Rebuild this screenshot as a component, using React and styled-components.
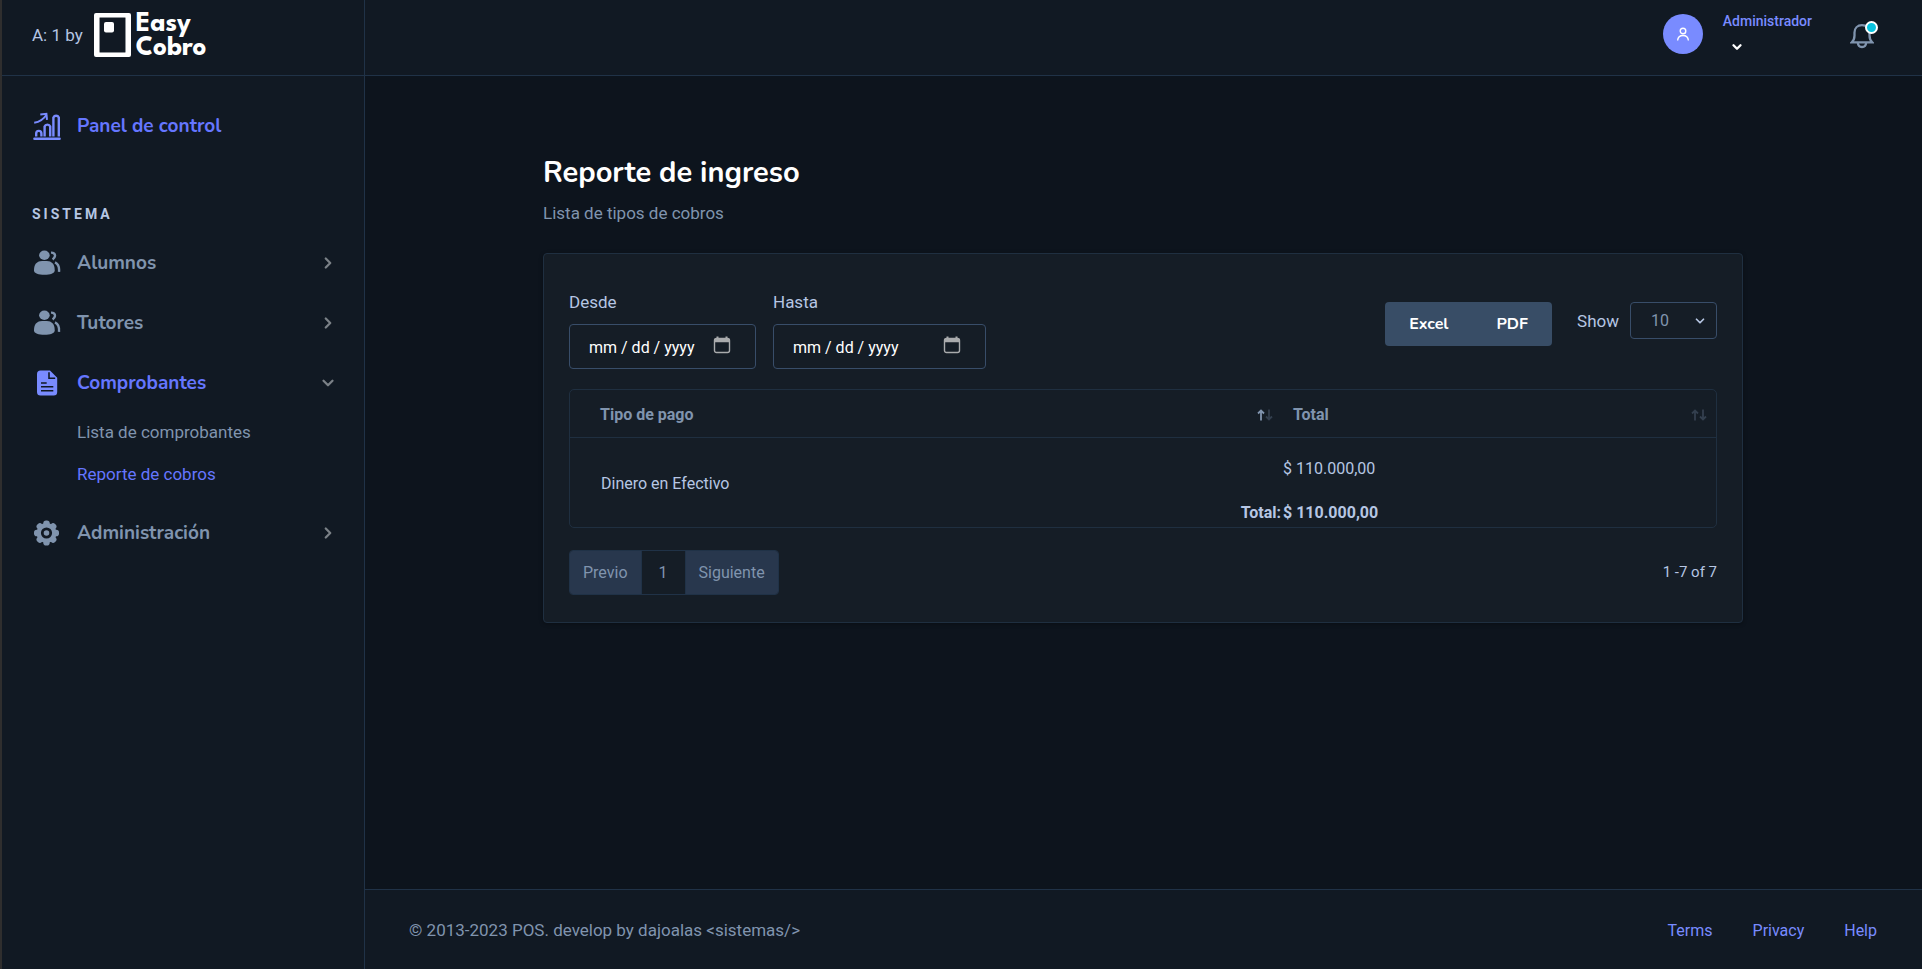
import React from "react";
import styled, { createGlobalStyle } from "styled-components";
import { ChevronDown, ChevronRight } from "lucide-react";

const heading = `Nunito, Lato, "Open Sans", sans-serif`;

const GlobalStyle = createGlobalStyle`
	* {
		box-sizing: border-box;
	}
	body {
		margin: 0;
		background: #0d141d;
		color: #b6c6e3;
		font-family: Roboto, "Liberation Sans", sans-serif;
		font-size: 17px;
		line-height: 24px;
	}
	a {
		color: inherit;
		text-decoration: none;
	}
	button,
	input,
	select {
		font: inherit;
		color: inherit;
		background: none;
		border: 0;
		margin: 0;
		padding: 0;
	}
	button {
		cursor: pointer;
	}
`;

const Page = styled.div`
	display: flex;
	min-height: 100vh;
	border-left: 2px solid #2f2e2e;
`;

const Sidebar = styled.aside`
	flex: 0 0 363px;
	background: #111923;
	border-right: 1px solid #203247;
`;

const Brand = styled.a`
	display: flex;
	align-items: center;
	height: 76px;
	padding: 0 30px 6px;
	border-bottom: 1px solid #203247;
`;

const LogoMark = styled.svg`
	width: 38px;
	height: 44px;
	margin: 0 4px 0 11px;
`;

const LogoText = styled.span`
	display: flex;
	flex-direction: column;
	padding-top: 4px;
	color: #fff;
	font-family: "League Spartan", Lato, sans-serif;
	font-size: 27px;
	font-weight: 700;
	line-height: 24px;
`;

const Menu = styled.nav`
	padding: 20px 0;
`;

const MenuTitle = styled.h6`
	margin: 48px 0 9px;
	padding: 0 30px;
	font-size: 14px;
	font-weight: 700;
	line-height: 20px;
	letter-spacing: 3px;
`;

const MenuLink = styled.a`
	display: flex;
	align-items: center;
	height: 60px;
	padding: 0 30px;
	color: ${(props) => (props.$active ? "#6576ff" : "#8094ae")};
	font-family: ${heading};
	font-size: 19px;
	font-weight: 700;

	svg:first-child {
		flex: none;
		width: 30px;
		height: 30px;
		margin-right: 15px;
		color: ${(props) => (props.$active ? "#798bff" : "#8094ae")};
	}
	svg:last-child:not(:first-child) {
		margin-left: auto;
		margin-right: -3px;
		color: #7b8187;
	}
`;

const SubMenu = styled.div`
	display: flex;
	flex-direction: column;
	gap: 4px;
	padding: 0 30px 10px 75px;
`;

const SubLink = styled.a`
	color: ${(props) => (props.$active ? "#6576ff" : "#8094ae")};
	line-height: 38px;
`;

const Main = styled.div`
	display: flex;
	flex: 1;
	flex-direction: column;
	min-width: 0;
`;

const Header = styled.header`
	display: flex;
	justify-content: flex-end;
	height: 76px;
	padding: 0 48px;
	background: #111923;
	border-bottom: 1px solid #203247;
`;

const Profile = styled.button`
	display: flex;
	align-items: flex-start;
	gap: 20px;
	margin-right: 38px;
	text-align: left;
`;

const Avatar = styled.span`
	display: grid;
	place-items: center;
	width: 40px;
	height: 40px;
	margin-top: 14px;
	border-radius: 50%;
	background: #798bff;
	color: #fff;
`;

const UserName = styled.span`
	display: flex;
	flex-direction: column;
	margin-top: 9px;
	color: #798bff;
	font-size: 14px;
	font-weight: 500;

	svg {
		margin: 7px 0 0 7px;
		color: #fff;
	}
`;

const Bell = styled.button`
	position: relative;
	align-self: flex-start;
	width: 24px;
	height: 26px;
	margin-top: 23px;
	color: #8094ae;
`;

const BellDot = styled.span`
	position: absolute;
	top: -2px;
	right: -4px;
	width: 13px;
	height: 13px;
	border: 2px solid #fff;
	border-radius: 50%;
	background: #09c2de;
`;

const Content = styled.main`
	flex: 1;
	width: 100%;
	max-width: 1201px;
	margin: 0 auto;
	padding: 79px 1px 40px 0;
`;

const Title = styled.h3`
	margin: 0;
	color: #fff;
	font-family: ${heading};
	font-size: 29px;
	font-weight: 700;
	line-height: 36px;
`;

const Subtitle = styled.p`
	margin: 8px 0 26px;
	color: #8094ae;
	line-height: 28px;
`;

const Card = styled.section`
	padding: 36px 25px 27px;
	border: 1px solid #1f2f40;
	border-radius: 4px;
	background: #151d26;
	box-shadow: 0 1px 4px rgba(0, 0, 0, 0.3);
`;

const Toolbar = styled.div`
	display: flex;
	flex-wrap: wrap;
	align-items: flex-start;
	margin-bottom: 20px;
`;

const Field = styled.div`
	width: ${(props) => props.$width};
	margin-right: 17px;

	label {
		display: block;
		margin-bottom: 10px;
	}
`;

const DateBox = styled.div`
	display: flex;
	align-items: center;
	height: 45px;
	padding: 2px 24px 0 19px;
	border: 1px solid #384d69;
	border-radius: 4px;
	color: #fff;
	font-size: 16px;

	input {
		flex: 1;
		min-width: 0;
	}
	input::placeholder {
		color: #fff;
		opacity: 1;
	}
	button {
		display: flex;
		margin-bottom: 5px;
		color: #a9abad;
	}
`;

const Tools = styled.div`
	display: flex;
	align-items: flex-start;
	margin: 12px 0 0 auto;
`;

const ButtonGroup = styled.div`
	display: flex;
	margin-right: 25px;
	border-radius: 4px;
	background: #384d66;
`;

const ExportButton = styled.button`
	padding: 10px 24px;
	color: #fff;
	font-family: ${heading};
	font-size: 16px;
	font-weight: 700;
`;

const PageSize = styled.div`
	display: flex;
	align-items: center;
	gap: 11px;
`;

const SelectBox = styled.span`
	position: relative;

	select {
		display: block;
		width: 87px;
		height: 37px;
		padding: 0 20px;
		border: 1px solid #384d69;
		border-radius: 4px;
		color: #8094ae;
		font-size: 16px;
		appearance: none;
	}
	svg {
		position: absolute;
		top: 12px;
		right: 10px;
		pointer-events: none;
	}
`;

const TableWrap = styled.div`
	border: 1px solid #1f2f40;
	border-radius: 5px;
`;

const Table = styled.table`
	width: 100%;
	border-spacing: 0;
	table-layout: fixed;
	font-size: 16px;
	text-align: left;
`;

const HeadCell = styled.th`
	width: ${(props) => props.$width};
	height: 48px;
	padding: 2px 9px 0 ${(props) => props.$indent};
	border-bottom: 1px solid #1f2f40;
	color: #8094ae;

	button {
		display: flex;
		align-items: center;
		justify-content: space-between;
		width: 100%;
		font-weight: 700;
	}
`;

const Cell = styled.td`
	padding: ${(props) => props.$pad};
	vertical-align: top;
`;

const TotalCell = styled.td`
	padding: 3px 1px 2px;
	font-weight: 700;
	text-align: ${(props) => props.$align || "left"};
`;

const TableFooter = styled.div`
	display: flex;
	justify-content: space-between;
	margin-top: 22px;
	font-size: 16px;
`;

const Pagination = styled.nav`
	display: flex;
	overflow: hidden;
	border: 1px solid #203247;
	border-radius: 4px;
`;

const PageButton = styled.button`
	min-width: 44px;
	height: 43px;
	padding: 0 13px;
	background: ${(props) => (props.$current ? "none" : "#28374d")};
	color: #8094ae;

	& + & {
		border-left: 1px solid #203247;
	}
`;

const Range = styled.div`
	margin-top: 10px;
	font-size: 15px;
`;

const Footer = styled.footer`
	display: flex;
	align-items: center;
	justify-content: space-between;
	height: 80px;
	padding: 0 45px 0 44px;
	border-top: 1px solid #203247;
	background: #111923;
	color: #8094ae;
`;

const FooterLinks = styled.div`
	display: flex;
	gap: 40px;
	padding-top: 2px;
	color: #798bff;
	font-size: 16px;
`;

const Logo = () => (
	<LogoMark viewBox='0 0 38 44'>
		<rect x='0' y='0' width='37' height='44' rx='2' fill='#fff' />
		<rect x='5.5' y='4.5' width='26' height='35' rx='1' fill='#111923' stroke='#8d9196' />
		<rect x='10' y='9' width='10' height='10.5' rx='2' fill='#fff' />
	</LogoMark>
);

const GrowthIcon = () => (
	<svg viewBox='0 0 30 30' fill='none' stroke='currentColor' strokeWidth='2.4'>
		<path d='M2.5 27.7h25' strokeWidth='2.6' strokeLinecap='round' />
		<path d='M4.2 25.5v-3a2.6 2.6 0 0 1 5.2 0v3M12.6 25.5v-10a3 3 0 0 1 5.6 0v10M21.4 25.5v-19a3 3 0 0 1 5.4 0v19' />
		<path d='M2.2 11.8c5.500-.8 9.300-3.400 12.300-8' strokeWidth='2' />
		<path d='M8.3 3.6l6.100-.8 .6 6' strokeWidth='2' />
	</svg>
);

const UsersIcon = () => (
	<svg viewBox='0 0 30 30' fill='currentColor'>
		<ellipse cx='12.4' cy='7.2' rx='5.3' ry='4.7' />
		<path d='M2 22.5c0-6 2.5-8.5 6-9.2 2.9-.5 5.9-.5 8.800 0 3.500.7 5.900 3.200 5.900 9.200 0 2.900-4.500 4.200-10.300 4.200S2 25.400 2 22.500z' />
		<path
			d='M19 4.600c2.500-.1 4.200 1.300 4 3.300-.1 1.400-.9 2.500-2.400 3.500M23 14.300c3.100 1.500 4.500 4.900 4 9.500'
			fill='none'
			stroke='currentColor'
			strokeWidth='2.4'
		/>
	</svg>
);

const DocIcon = () => (
	<svg viewBox='0 0 30 30' fill='currentColor'>
		<path d='M8.5 2.5H18l7.2 7.2v14.3a3.5 3.5 0 0 1-3.500 3.500H8.500A3.500 3.500 0 0 1 5 24V6a3.500 3.500 0 0 1 3.500-3.500z' />
		<path
			d='M17 4.300v6h6.200M9 15h5.700M9 18.800h12.300M9 22.700h12.300'
			fill='none'
			stroke='#111923'
			strokeWidth='1.6'
		/>
	</svg>
);

const GearIcon = () => (
	<svg viewBox='0 0 30 30' fill='currentColor'>
		<circle cx='14.5' cy='15' r='10' />
		{[0, 45, 90, 135].map((angle) => (
			<rect
				key={angle}
				x='11.3'
				y='2.5'
				width='6.4'
				height='25'
				rx='2.8'
				transform={`rotate(${angle} 14.5 15)`}
			/>
		))}
		<circle cx='14.5' cy='15' r='4.2' fill='none' stroke='#111923' strokeWidth='2.8' />
	</svg>
);

const UserIcon = () => (
	<svg width='16' height='16' viewBox='0 0 16 16' fill='none' stroke='currentColor' strokeWidth='1.4'>
		<circle cx='8' cy='5' r='2.8' />
		<path d='M2.6 14.5c.3-3.5 2.5-5 5.4-5s5.100 1.500 5.400 5' />
	</svg>
);

const BellIcon = () => (
	<svg width='24' height='26' viewBox='0 0 24 26' fill='none' stroke='currentColor' strokeWidth='2.3'>
		<path d='M1.800 19.300c2-2 2.700-4 2.700-6.800V9.500c0-4.300 3-7.300 7.500-7.300s7.500 3 7.500 7.300v3c0 2.800.7 4.800 2.700 6.800z' />
		<path d='M7.800 19.500c.2 2.900 1.900 4.500 4.200 4.500s4-1.600 4.200-4.500' />
	</svg>
);

const CalendarIcon = () => (
	<svg width='18' height='18' viewBox='0 0 18 18' fill='none' stroke='currentColor'>
		<rect x='1.5' y='2.5' width='15' height='14' rx='2' strokeWidth='1.4' />
		<path d='M1.5 4.500h15' strokeWidth='3.5' />
		<path d='M4.5 .5v3M13.5 .5v3' strokeWidth='2' />
	</svg>
);

const SortIcon = ({ sorted }) => (
	<svg width='16' height='12' viewBox='0 0 16 12' fill='none' strokeWidth='1.8'>
		<path d='M1 4.500l3-3 3 3M4 1.500V11.500' stroke={sorted ? "#8094ae" : "#333f4e"} />
		<path d='M9 7.500l3 3 3-3M12 10.500V.5' stroke='#333f4e' />
	</svg>
);

const DateField = ({ id, label, width }) => (
	<Field $width={width}>
		<label htmlFor={id}>{label}</label>
		<DateBox>
			<input id={id} type='text' placeholder='mm / dd / yyyy' />
			<button type='button' aria-label={`Abrir calendario ${label}`}>
				<CalendarIcon />
			</button>
		</DateBox>
	</Field>
);

const rows = [{ type: "Dinero en Efectivo", total: "$ 110.000,00" }];

const App = () => {
	return (
		<>
			<GlobalStyle />
			<Page>
				<Sidebar>
					<Brand href='#'>
						A: 1 by
						<Logo />
						<LogoText>
							<span>Easy</span>
							<span>Cobro</span>
						</LogoText>
					</Brand>
					<Menu>
						<MenuLink href='#' $active>
							<GrowthIcon />
							Panel de control
						</MenuLink>
						<MenuTitle>SISTEMA</MenuTitle>
						<MenuLink href='#'>
							<UsersIcon />
							Alumnos
							<ChevronRight size={18} strokeWidth={3} />
						</MenuLink>
						<MenuLink href='#'>
							<UsersIcon />
							Tutores
							<ChevronRight size={18} strokeWidth={3} />
						</MenuLink>
						<MenuLink href='#' $active>
							<DocIcon />
							Comprobantes
							<ChevronDown size={18} strokeWidth={3} />
						</MenuLink>
						<SubMenu>
							<SubLink href='#'>Lista de comprobantes</SubLink>
							<SubLink href='#' $active>
								Reporte de cobros
							</SubLink>
						</SubMenu>
						<MenuLink href='#'>
							<GearIcon />
							Administración
							<ChevronRight size={18} strokeWidth={3} />
						</MenuLink>
					</Menu>
				</Sidebar>
				<Main>
					<Header>
						<Profile type='button'>
							<Avatar>
								<UserIcon />
							</Avatar>
							<UserName>
								Administrador
								<ChevronDown size={14} strokeWidth={4} />
							</UserName>
						</Profile>
						<Bell type='button' aria-label='Notificaciones'>
							<BellIcon />
							<BellDot />
						</Bell>
					</Header>
					<Content>
						<Title>Reporte de ingreso</Title>
						<Subtitle>Lista de tipos de cobros</Subtitle>
						<Card>
							<Toolbar>
								<DateField id='desde' label='Desde' width='187px' />
								<DateField id='hasta' label='Hasta' width='213px' />
								<Tools>
									<ButtonGroup>
										<ExportButton type='button'>Excel</ExportButton>
										<ExportButton type='button'>PDF</ExportButton>
									</ButtonGroup>
									<PageSize>
										<label htmlFor='page-size'>Show</label>
										<SelectBox>
											<select id='page-size' defaultValue='10'>
												<option>10</option>
												<option>25</option>
												<option>50</option>
											</select>
											<ChevronDown size={14} strokeWidth={3} />
										</SelectBox>
									</PageSize>
								</Tools>
							</Toolbar>
							<TableWrap>
								<Table>
									<thead>
										<tr>
											<HeadCell $indent='30px'>
												<button type='button'>
													Tipo de pago
													<SortIcon sorted />
												</button>
											</HeadCell>
											<HeadCell $width='434px' $indent='11px'>
												<button type='button'>
													Total
													<SortIcon />
												</button>
											</HeadCell>
										</tr>
									</thead>
									<tbody>
										{rows.map((row) => (
											<tr key={row.type}>
												<Cell $pad='34px 0 2px 31px'>{row.type}</Cell>
												<Cell $pad='19px 0 17px 1px'>{row.total}</Cell>
											</tr>
										))}
									</tbody>
									<tfoot>
										<tr>
											<TotalCell $align='right'>Total:</TotalCell>
											<TotalCell>$ 110.000,00</TotalCell>
										</tr>
									</tfoot>
								</Table>
							</TableWrap>
							<TableFooter>
								<Pagination>
									<PageButton type='button'>Previo</PageButton>
									<PageButton type='button' $current>
										1
									</PageButton>
									<PageButton type='button'>Siguiente</PageButton>
								</Pagination>
								<Range>1 -7 of 7</Range>
							</TableFooter>
						</Card>
					</Content>
					<Footer>
						<span>© 2013-2023 POS. develop by dajoalas &lt;sistemas/&gt;</span>
						<FooterLinks>
							<a href='#'>Terms</a>
							<a href='#'>Privacy</a>
							<a href='#'>Help</a>
						</FooterLinks>
					</Footer>
				</Main>
			</Page>
		</>
	);
};

export default App;
